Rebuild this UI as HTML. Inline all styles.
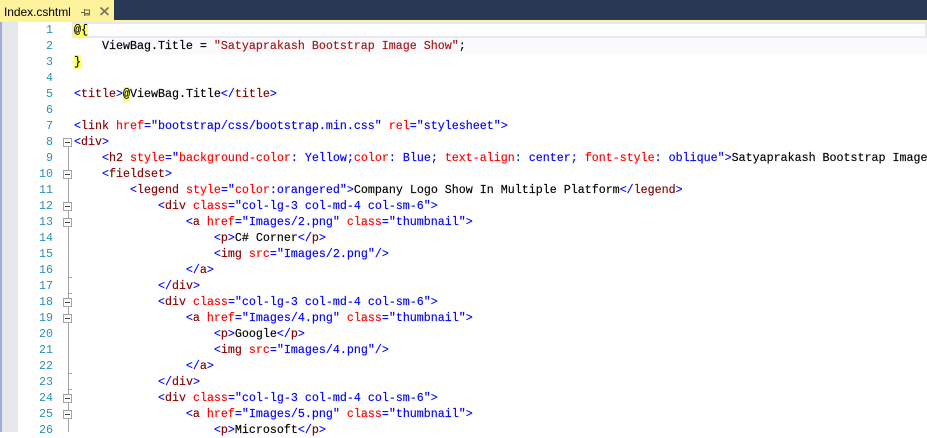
<!DOCTYPE html>
<html><head><meta charset="utf-8"><style>
html,body{margin:0;padding:0;background:#fff}
body{width:927px;height:432px;position:relative;overflow:hidden;font-family:"Liberation Mono",monospace}
div{position:absolute}
.l{left:74px;height:16px;line-height:16px;font-size:11.67px;white-space:pre;color:#000;font-weight:400;-webkit-text-stroke:.15px}
.n{left:20px;width:33px;text-align:right;height:16px;line-height:16px;font-size:11.67px;color:#2b91af}
i{font-style:normal}
.b{color:#0000ff}.m{color:#800000}.r{color:#ff0000}.s{color:#a31515}
.y{background:#ffff66}
.f{left:63px;width:7px;height:7px;border:1px solid #a5a5a5;background:#fff}
.f:after{content:"";position:absolute;left:1px;top:3px;width:5px;height:1px;background:#444}
.t{left:68px;width:4px;height:1px;background:#a5a5a5}
</style></head><body>
<div style="left:0;top:0;width:927px;height:20px;background:#293955"></div>
<div style="left:0;top:20px;width:927px;height:2px;background:#fff29d"></div>
<div style="left:0;top:0;width:114px;height:22px;background:#fff29d"></div>
<div style="left:4px;top:3px;height:18px;line-height:18px;font:12px/18px 'Liberation Sans',sans-serif;color:#000;letter-spacing:-.05px">Index.cshtml</div>
<svg style="position:absolute;left:80px;top:4px" width="30" height="14" viewBox="0 0 30 14"><path d="M1 8.500H4.500M4.500 5V12M4.500 6H9.500V11H4.500M5 9.500H9.500" fill="none" stroke="#6b6850" stroke-width="1"/><path d="M20.500 3.500L28.500 11M28.500 3.500L20.500 11" fill="none" stroke="#7a7660" stroke-width="1.800"/></svg>
<div style="left:0;top:22px;width:2px;height:410px;background:#a3acd6"></div>
<div style="left:2px;top:22px;width:16px;height:410px;background:#e6e7e8"></div>
<div style="left:72px;top:22px;width:855px;height:16px;background:#e8e8f0"></div>
<div style="left:74px;top:24px;width:851px;height:12px;background:#fff"></div>
<div style="left:102px;top:38px;width:825px;height:16px;background:#fafafd"></div>

<div class="n" style="top:22px">1</div><div class="n" style="top:38px">2</div><div class="n" style="top:54px">3</div><div class="n" style="top:70px">4</div><div class="n" style="top:86px">5</div><div class="n" style="top:102px">6</div><div class="n" style="top:118px">7</div><div class="n" style="top:134px">8</div><div class="n" style="top:150px">9</div><div class="n" style="top:166px">10</div><div class="n" style="top:182px">11</div><div class="n" style="top:198px">12</div><div class="n" style="top:214px">13</div><div class="n" style="top:230px">14</div><div class="n" style="top:246px">15</div><div class="n" style="top:262px">16</div><div class="n" style="top:278px">17</div><div class="n" style="top:294px">18</div><div class="n" style="top:310px">19</div><div class="n" style="top:326px">20</div><div class="n" style="top:342px">21</div><div class="n" style="top:358px">22</div><div class="n" style="top:374px">23</div><div class="n" style="top:390px">24</div><div class="n" style="top:406px">25</div><div class="n" style="top:422px">26</div>

<div style="left:68px;top:146px;width:1px;height:286px;background:#a5a5a5"></div>
<div class="t" style="top:277px"></div><div class="t" style="top:293px"></div><div class="t" style="top:373px"></div><div class="t" style="top:389px"></div>
<div class="f" style="top:138px"></div><div class="f" style="top:170px"></div><div class="f" style="top:202px"></div><div class="f" style="top:218px"></div><div class="f" style="top:298px"></div><div class="f" style="top:314px"></div><div class="f" style="top:394px"></div><div class="f" style="top:410px"></div>

<div class="l" style="top:22px"><i class="y">@{</i></div>
<div class="l" style="top:38px">    ViewBag.Title = <i class="s">"Satyaprakash Bootstrap Image Show"</i>;</div>
<div class="l" style="top:54px"><i class="y">}</i></div>
<div class="l" style="top:86px"><i class="b">&lt;</i><i class="m">title</i><i class="b">&gt;</i><i class="y">@</i>ViewBag.Title<i class="b">&lt;/</i><i class="m">title</i><i class="b">&gt;</i></div>
<div class="l" style="top:118px"><i class="b">&lt;</i><i class="m">link</i> <i class="r">href</i><i class="b">="bootstrap/css/bootstrap.min.css"</i> <i class="r">rel</i><i class="b">="stylesheet"&gt;</i></div>
<div class="l" style="top:134px"><i class="b">&lt;</i><i class="m">div</i><i class="b">&gt;</i></div>
<div class="l" style="top:150px">    <i class="b">&lt;</i><i class="m">h2</i> <i class="r">style</i><i class="b">="</i><i class="r">background-color</i><i class="b">: Yellow;</i><i class="r">color</i><i class="b">: Blue; </i><i class="r">text-align</i><i class="b">: center; </i><i class="r">font-style</i><i class="b">: oblique"&gt;</i>Satyaprakash Bootstrap Image</div>
<div class="l" style="top:166px">    <i class="b">&lt;</i><i class="m">fieldset</i><i class="b">&gt;</i></div>
<div class="l" style="top:182px">        <i class="b">&lt;</i><i class="m">legend</i> <i class="r">style</i><i class="b">="</i><i class="r">color</i><i class="b">:orangered"&gt;</i>Company Logo Show In Multiple Platform<i class="b">&lt;/</i><i class="m">legend</i><i class="b">&gt;</i></div>
<div class="l" style="top:198px">            <i class="b">&lt;</i><i class="m">div</i> <i class="r">class</i><i class="b">="col-lg-3 col-md-4 col-sm-6"&gt;</i></div>
<div class="l" style="top:214px">                <i class="b">&lt;</i><i class="m">a</i> <i class="r">href</i><i class="b">="Images/2.png"</i> <i class="r">class</i><i class="b">="thumbnail"&gt;</i></div>
<div class="l" style="top:230px">                    <i class="b">&lt;</i><i class="m">p</i><i class="b">&gt;</i>C# Corner<i class="b">&lt;/</i><i class="m">p</i><i class="b">&gt;</i></div>
<div class="l" style="top:246px">                    <i class="b">&lt;</i><i class="m">img</i> <i class="r">src</i><i class="b">="Images/2.png"/&gt;</i></div>
<div class="l" style="top:262px">                <i class="b">&lt;/</i><i class="m">a</i><i class="b">&gt;</i></div>
<div class="l" style="top:278px">            <i class="b">&lt;/</i><i class="m">div</i><i class="b">&gt;</i></div>
<div class="l" style="top:294px">            <i class="b">&lt;</i><i class="m">div</i> <i class="r">class</i><i class="b">="col-lg-3 col-md-4 col-sm-6"&gt;</i></div>
<div class="l" style="top:310px">                <i class="b">&lt;</i><i class="m">a</i> <i class="r">href</i><i class="b">="Images/4.png"</i> <i class="r">class</i><i class="b">="thumbnail"&gt;</i></div>
<div class="l" style="top:326px">                    <i class="b">&lt;</i><i class="m">p</i><i class="b">&gt;</i>Google<i class="b">&lt;/</i><i class="m">p</i><i class="b">&gt;</i></div>
<div class="l" style="top:342px">                    <i class="b">&lt;</i><i class="m">img</i> <i class="r">src</i><i class="b">="Images/4.png"/&gt;</i></div>
<div class="l" style="top:358px">                <i class="b">&lt;/</i><i class="m">a</i><i class="b">&gt;</i></div>
<div class="l" style="top:374px">            <i class="b">&lt;/</i><i class="m">div</i><i class="b">&gt;</i></div>
<div class="l" style="top:390px">            <i class="b">&lt;</i><i class="m">div</i> <i class="r">class</i><i class="b">="col-lg-3 col-md-4 col-sm-6"&gt;</i></div>
<div class="l" style="top:406px">                <i class="b">&lt;</i><i class="m">a</i> <i class="r">href</i><i class="b">="Images/5.png"</i> <i class="r">class</i><i class="b">="thumbnail"&gt;</i></div>
<div class="l" style="top:422px">                    <i class="b">&lt;</i><i class="m">p</i><i class="b">&gt;</i>Microsoft<i class="b">&lt;/</i><i class="m">p</i><i class="b">&gt;</i></div>
</body></html>
